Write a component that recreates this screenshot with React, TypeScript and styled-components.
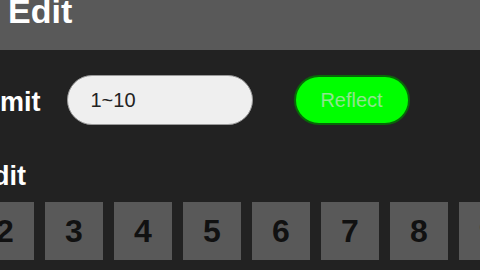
import React from 'react';
import styled, { createGlobalStyle } from 'styled-components';

const GlobalStyle = createGlobalStyle`
  html, body {
    margin: 0;
    padding: 0;
    background: #222222;
    overflow: hidden;
  }
  body {
    font-family: "Liberation Sans", Arial, sans-serif;
  }
`;

const numbers = [1, 2, 3, 4, 5, 6, 7, 8, 9, 10];

const App = () => {
  return (
    <Page>
      <GlobalStyle />
      <Header>
        <HeaderTitle>Edit</HeaderTitle>
      </Header>
      <LimitRow>
        <Label>Limit</Label>
        <LimitInput defaultValue="1~10" />
        <ReflectButton>Reflect</ReflectButton>
      </LimitRow>
      <SectionLabel>Edit</SectionLabel>
      <TileRow>
        {numbers.map((n) => (
          <Tile key={n}>{n}</Tile>
        ))}
      </TileRow>
    </Page>
  );
};

const Page = styled.div`
  width: 480px;
  height: 270px;
  overflow: hidden;
  background: #222222;
  color: #ffffff;
`;

const Header = styled.header`
  height: 50px;
  background: #595959;
  padding-left: 8px;
  overflow: hidden;
`;

const HeaderTitle = styled.h1`
  margin: -6px 0 0 0;
  font-size: 34px;
  line-height: 34px;
  font-weight: 700;
  color: #ffffff;
`;

const LimitRow = styled.div`
  display: flex;
  align-items: center;
  height: 50px;
  margin: 25px 0 0 -24px;
`;

const Label = styled.span`
  flex-shrink: 0;
  font-size: 27px;
  font-weight: 700;
  margin: 4px 26px 0 0;
  color: #ffffff;
`;

const LimitInput = styled.input`
  flex-shrink: 0;
  box-sizing: border-box;
  width: 186px;
  height: 50px;
  padding: 0 0 0 23px;
  border: 1px solid #9a9a9a;
  border-radius: 25px;
  background: #efefef;
  color: #222222;
  font-family: "Liberation Sans", Arial, sans-serif;
  font-size: 20px;
  outline: none;
`;

const ReflectButton = styled.button`
  flex-shrink: 0;
  box-sizing: border-box;
  width: 116px;
  height: 50px;
  margin-left: 41px;
  border: 2px solid #086808;
  border-radius: 25px;
  background: #00ff00;
  color: #8fe58f;
  font-family: "Liberation Sans", Arial, sans-serif;
  font-size: 20px;
`;

const SectionLabel = styled.div`
  margin: 37px 0 0 -25px;
  font-size: 27px;
  line-height: 28px;
  font-weight: 700;
  color: #ffffff;
`;

const TileRow = styled.div`
  display: flex;
  gap: 11px;
  margin: 12px 0 0 -93px;
`;

const Tile = styled.div`
  flex: 0 0 58px;
  height: 58px;
  display: flex;
  align-items: center;
  justify-content: center;
  background: #595959;
  color: #111111;
  font-size: 32px;
  font-weight: 700;
`;

export default App;
